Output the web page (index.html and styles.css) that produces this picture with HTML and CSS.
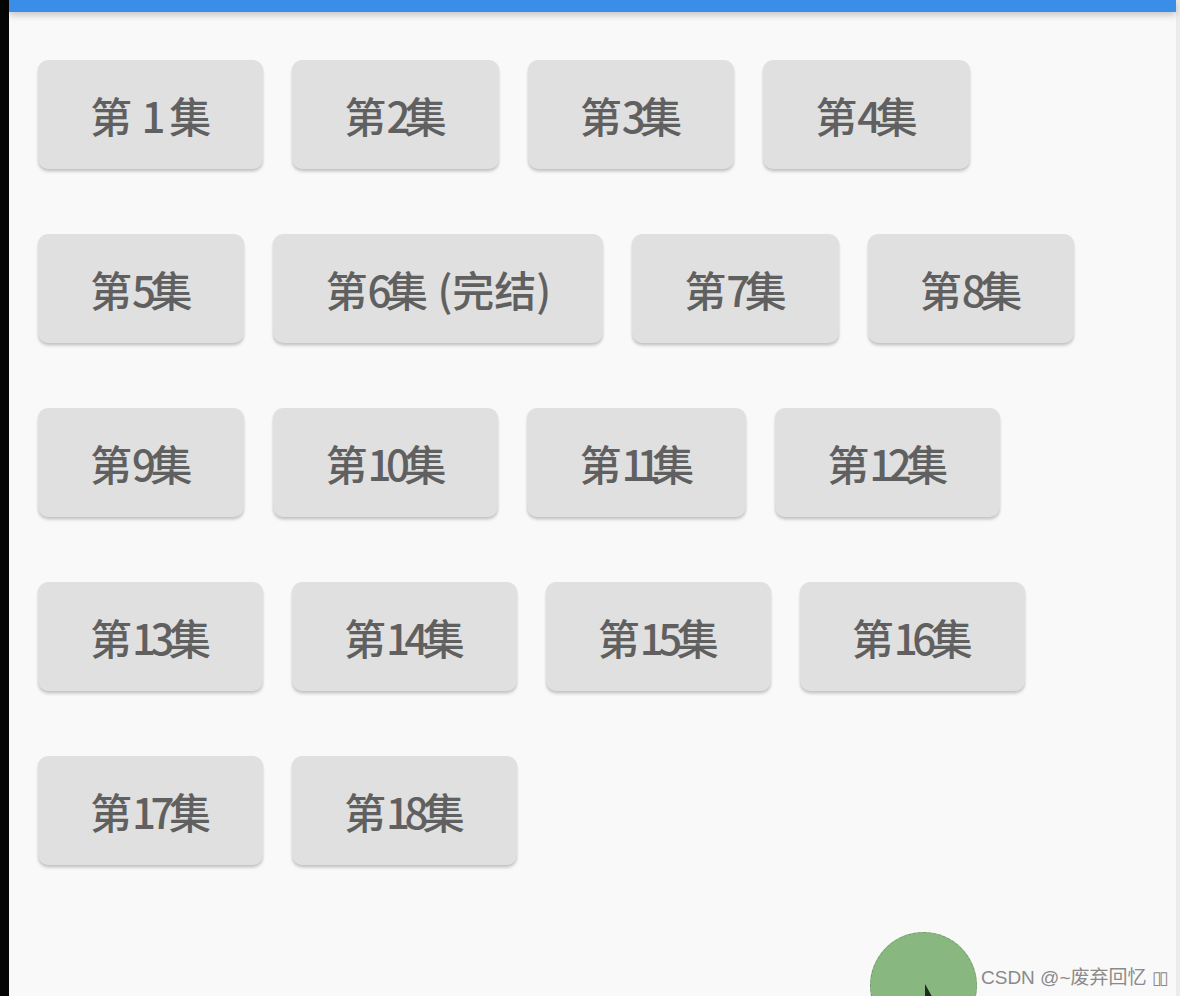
FILE: index.html
```html
<!DOCTYPE html>
<html lang="zh-CN">
<head>
<meta charset="utf-8">
<title>剧集列表</title>
<link rel="stylesheet" href="styles.css">
</head>
<body>
<div class="screen">
  <div class="leftbar"></div>
  <div class="main">
    <div class="appbar"></div>
    <div class="episodes">
      <button class="ep">第 <span class="n">1</span> 集</button>
      <button class="ep">第<span class="n">2</span>集</button>
      <button class="ep">第<span class="n">3</span>集</button>
      <button class="ep">第<span class="n">4</span>集</button>
      <button class="ep">第<span class="n">5</span>集</button>
      <button class="ep">第<span class="n">6</span>集 (完结)</button>
      <button class="ep">第<span class="n">7</span>集</button>
      <button class="ep">第<span class="n">8</span>集</button>
      <button class="ep">第<span class="n">9</span>集</button>
      <button class="ep">第<span class="n">10</span>集</button>
      <button class="ep">第<span class="n narrow">11</span>集</button>
      <button class="ep">第<span class="n">12</span>集</button>
      <button class="ep">第<span class="n">13</span>集</button>
      <button class="ep">第<span class="n">14</span>集</button>
      <button class="ep">第<span class="n">15</span>集</button>
      <button class="ep">第<span class="n">16</span>集</button>
      <button class="ep">第<span class="n">17</span>集</button>
      <button class="ep">第<span class="n">18</span>集</button>
    </div>
  </div>
  <div class="rightline"></div>
  <div class="fab">
    <svg class="cursor" viewBox="0 0 20 20" width="20" height="20"><path d="M2 1 L2 18 L7 13 L12 19 Z" fill="#1c2b1c"/></svg>
  </div>
  <div class="watermark">CSDN @~废弃回忆 <span class="tofu">▯▯</span></div>
</div>
</body>
</html>
```

FILE: styles.css
```css
* { box-sizing: border-box; }
html, body {
  margin: 0;
  padding: 0;
  width: 1180px;
  height: 996px;
  overflow: hidden;
  background: #f9f9f9;
}
.screen {
  position: relative;
  display: flex;
  width: 1180px;
  height: 996px;
  overflow: hidden;
}
.leftbar {
  width: 9px;
  flex: none;
  background: #050505;
  box-shadow: 1px 0 2px rgba(0,0,0,0.25);
}
.main {
  flex: 1;
  display: flex;
  flex-direction: column;
  background: #f9f9f9;
}
.rightline {
  width: 4px;
  flex: none;
  background: #ececec;
}
.appbar {
  height: 12px;
  flex: none;
  background: #3a8ee8;
  box-shadow: 0 3px 7px rgba(0,0,0,0.22);
  position: relative;
  z-index: 1;
}
.episodes {
  display: flex;
  flex-wrap: wrap;
  align-content: flex-start;
  gap: 65px 29px;
  padding: 48px 0 0 29px;
}
.ep {
  height: 109px;
  padding: 0 52px;
  border: none;
  border-radius: 10px;
  background: #e0e0e0;
  box-shadow: 0 3px 3px rgba(0,0,0,0.16), 0 1px 2px rgba(0,0,0,0.08);
  font-family: "Noto Sans CJK SC", sans-serif;
  font-size: 42px;
  font-weight: 500;
  color: #606060;
  white-space: pre;
  display: flex;
  align-items: center;
  justify-content: center;
  cursor: pointer;
}
.n {
  letter-spacing: -5.5px;
}
.n.narrow {
  letter-spacing: -8.5px;
}
.fab {
  position: absolute;
  left: 870px;
  top: 932px;
  width: 107px;
  height: 107px;
  border-radius: 50%;
  background: #88b880;
  border: 1px dashed #6f9a68;
}
.cursor {
  position: absolute;
  left: 52px;
  top: 50px;
}
.watermark {
  position: absolute;
  left: 981px;
  top: 962px;
  font-family: "Liberation Sans", "Noto Sans CJK SC", sans-serif;
  font-size: 19px;
  color: #8a8a8a;
  white-space: nowrap;
}
.tofu {
  font-family: "DejaVu Sans", sans-serif;
  font-size: 18px;
  letter-spacing: -3px;
}
```
